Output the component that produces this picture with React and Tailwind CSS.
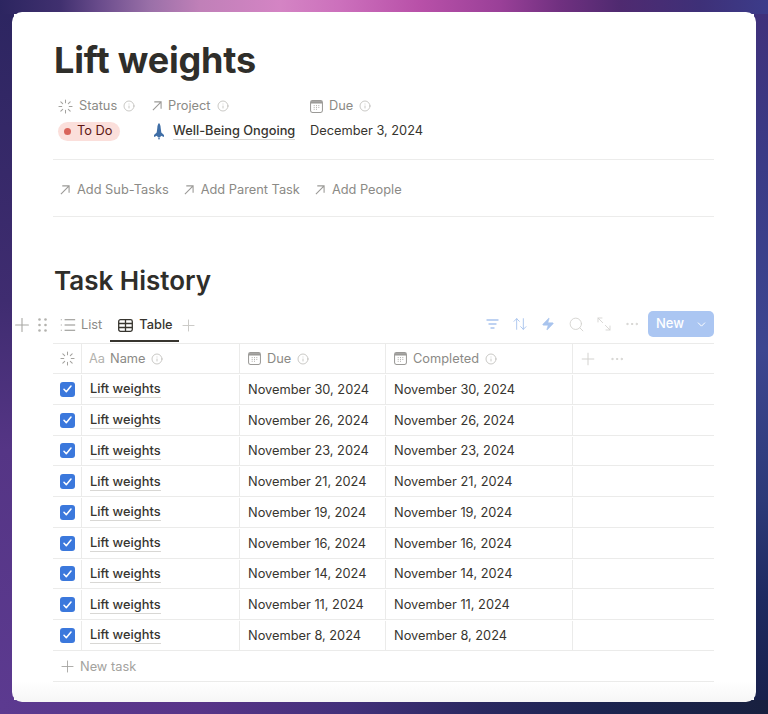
import { ArrowUpDown, ChevronDown, Ellipsis, Info, List, Maximize2, Plus, Search, Zap } from 'lucide-react';

const rows = [
  'November 30, 2024',
  'November 26, 2024',
  'November 23, 2024',
  'November 21, 2024',
  'November 19, 2024',
  'November 16, 2024',
  'November 14, 2024',
  'November 11, 2024',
  'November 8, 2024',
];

const StatusIcon = ({ size = 15 }) => (
  <svg width={size} height={size} viewBox="0 0 16 16" stroke="#a3a29e" strokeWidth="1.1" strokeLinecap="round" className="shrink-0">
    <path d="M8 1v3M8 12v3M1 8h3M12 8h3M3 3l2 2M11 11l2 2M3 13l2-2M11 5l2-2" />
  </svg>
);

const CalendarIcon = () => (
  <svg width="13" height="13" viewBox="0 0 14 14" className="shrink-0">
    <rect x="0.6" y="0.6" width="12.8" height="12.8" rx="2" fill="none" stroke="#9b9a97" strokeWidth="1.1" />
    <path d="M1 1.2h12v2.6H1z" fill="#9b9a97" />
    <path d="M4 6h1M6.500 6h1M9 6h1M4 8h1M6.500 8h1M9 8h1M4 10h1M6.500 10h1" stroke="#a3a29e" strokeWidth="1" />
  </svg>
);

const TableIcon = () => (
  <svg width="15" height="13" viewBox="0 0 15 13" fill="none" stroke="#37352f" strokeWidth="1.3" className="shrink-0">
    <rect x="0.7" y="0.7" width="13.6" height="11.6" rx="1.8" />
    <path d="M0.7 4.500h13.600M0.7 8.500h13.600M7.500 0.7v11.600" />
  </svg>
);

const Rocket = () => (
  <svg width="12" height="17" viewBox="0 0 12 17" className="shrink-0">
    <path d="M6 0c1.200 1.200 1.600 3 1.700 5l.6 4.400L11 12v2L8 12.800 7.400 14H4.600L4 12.800 1 14v-2l2.700-2.600.6-4.400C4.400 3 4.800 1.200 6 0z" fill="#3f6ea6" />
    <path d="M4.800 14.500h2.400L6 17z" fill="#3f6ea6" />
  </svg>
);

const Grip = () => (
  <svg width="9" height="14" viewBox="0 0 9 14" fill="#b3b2ae">
    <circle cx="1.500" cy="1.500" r="1.300" />
    <circle cx="7.500" cy="1.500" r="1.300" />
    <circle cx="1.500" cy="7" r="1.300" />
    <circle cx="7.500" cy="7" r="1.300" />
    <circle cx="1.500" cy="12.500" r="1.300" />
    <circle cx="7.500" cy="12.500" r="1.300" />
  </svg>
);

const Tip = () => <Info size={12} strokeWidth={1.4} className="shrink-0 text-[#b3b2ae]" />;

const LinkArrow = () => (
  <svg width="10" height="10" viewBox="0 0 11 11" fill="none" stroke="#9b9a97" strokeWidth="1.200" className="shrink-0">
    <path d="M1 10L10 1M2.500 1H10v7.500" />
  </svg>
);

const Check = () => (
  <div className="flex size-[15px] items-center justify-center rounded-[3px] bg-[#3b78dc]">
    <svg width="9" height="8" viewBox="0 0 9 8" fill="none" stroke="white" strokeWidth="1.500" strokeLinecap="round" strokeLinejoin="round">
      <path d="M1 4.200l2.300 2.500L8 1" />
    </svg>
  </div>
);

const Prop = ({ icon, label, value, className }) => (
  <div className={className}>
    <div className="flex h-[20px] items-center gap-[6px] text-[12.8px] text-[#8b8a86]">
      {icon}
      <span>{label}</span>
      <Tip />
    </div>
    <div className="mt-[5px] flex h-[20px] items-center">{value}</div>
  </div>
);

const Cell = ({ children, className = '' }) => (
  <div className={`flex items-center border-r border-[#ebebea] ${className}`}>{children}</div>
);

const ToolSlot = ({ children }) => <div className="flex w-[28px] justify-center">{children}</div>;

const App = () => {
  return (
    <div className="h-[714px] w-[768px] overflow-hidden p-3 font-['Inter','Liberation_Sans',sans-serif] [background:linear-gradient(to_right,#2c2560_0px,#40306f_60px,#6a4c8c_100px,#9a70a8_150px,#c080b8_200px,#d484c4_280px,#cc70bc_340px,#b850a8_420px,#9a4098_500px,#703080_560px,#4f2a70_620px,#3e3078_700px,#3c3c8a_768px)_top/100%_14px_no-repeat,linear-gradient(to_right,#5c3a90_0px,#583488_200px,#42307a_350px,#2a2860_480px,#1c2450_600px,#18203f_768px)_bottom/100%_14px_no-repeat,linear-gradient(to_bottom,#2c2560_0px,#3f2c70_300px,#553585_450px,#5c3a90_714px)_left/14px_100%_no-repeat,linear-gradient(to_bottom,#40307a_0px,#3a3a85_150px,#3c4690_350px,#2d3a78_500px,#1e2a60_600px,#18204a_714px)_right/14px_100%_no-repeat]">
      <div className="h-[690px] w-[744px] rounded-[10px] bg-[linear-gradient(to_bottom,#ffffff_97%,#f6f6f6_100%)] pl-[41px] pr-[42px] pt-[28px] text-[#37352f]">
        <h1 className="ml-px h-[40px] text-[36px] font-bold leading-[40px] tracking-[-0.2px] text-[#2f2e2a]">Lift weights</h1>

        <div className="mt-[16px] flex h-[54px]">
          <Prop
            className="w-[98px] pl-[5px]"
            icon={<StatusIcon />}
            label="Status"
            value={
              <span className="flex h-[19px] items-center gap-[6px] rounded-full bg-[#fbdfdb] pl-[6px] pr-[8px] text-[12.8px] text-[#5d1715]">
                <span className="size-[7px] rounded-full bg-[#d9645a]" />
                To Do
              </span>
            }
          />
          <Prop
            className="w-[159px] pl-px"
            icon={<LinkArrow />}
            label="Project"
            value={
              <span className="flex items-center gap-[8px] pl-px text-[12.8px] font-medium">
                <Rocket />
                <span className="border-b border-[#d8d7d4] leading-[17px]">Well-Being Ongoing</span>
              </span>
            }
          />
          <Prop
            icon={<CalendarIcon />}
            label="Due"
            value={<span className="text-[12.8px] text-[#37352f]">December 3, 2024</span>}
          />
        </div>

        <div className="mt-[9px] flex h-[58px] items-center gap-[15px] border-y border-[#ececeb] pl-[7px] pt-[3px] text-[12.8px] text-[#8b8a86]">
          <span className="flex items-center gap-[7px]"><LinkArrow />Add Sub-Tasks</span>
          <span className="flex items-center gap-[7px]"><LinkArrow />Add Parent Task</span>
          <span className="flex items-center gap-[7px]"><LinkArrow />Add People</span>
        </div>

        <h2 className="ml-px mt-[47px] h-[34px] text-[26px] font-semibold leading-[34px] text-[#2f2e2a]">Task History</h2>

        <div className="relative mt-[13px] flex h-[32px] items-start justify-between">
          <div className="absolute left-[-42px] top-[3px] flex items-center gap-[5px] text-[#a8a7a3]">
            <Plus size={22} strokeWidth={1.2} />
            <Grip />
          </div>
          <div className="flex h-full items-start text-[12.8px]">
            <div className="flex h-[28px] items-center gap-[4px] pl-[6px] text-[#8b8a86]">
              <List size={18} strokeWidth={1.3} />
              List
            </div>
            <div className="ml-[8px] flex h-[31px] w-[69px] items-center gap-[6px] border-b-2 border-[#37352f] pb-[1px] pl-[8px] font-medium text-[#37352f]">
              <TableIcon />
              Table
            </div>
            <Plus size={19} strokeWidth={1.2} className="mt-[5px] text-[#c9c8c5]" />
          </div>
          <div className="flex items-center">
            <div className="flex items-center">
              <ToolSlot>
                <svg width="13" height="10" viewBox="0 0 13 10" stroke="#a9c4ee" strokeWidth="1.400" strokeLinecap="round">
                  <path d="M1 1h11M3 5h7M5 9h3" />
                </svg>
              </ToolSlot>
              <ToolSlot><ArrowUpDown size={16} strokeWidth={1.4} className="text-[#a9c4ee]" /></ToolSlot>
              <ToolSlot><Zap size={14} fill="#a9c4ee" strokeWidth={1} className="text-[#a9c4ee]" /></ToolSlot>
              <ToolSlot><Search size={17} strokeWidth={1.3} className="text-[#d3d2cf]" /></ToolSlot>
              <ToolSlot><Maximize2 size={16} strokeWidth={1.3} className="rotate-90 text-[#d3d2cf]" /></ToolSlot>
              <ToolSlot><Ellipsis size={16} strokeWidth={1.5} className="text-[#d3d2cf]" /></ToolSlot>
            </div>
            <div className="ml-[2px] flex h-[26px] w-[66px] items-center justify-between rounded-[5px] bg-[#abc6f2] pl-[8px] pr-[6px] text-[13px] font-medium text-white">
              New
              <ChevronDown size={13} strokeWidth={1.8} />
            </div>
          </div>
        </div>

        <div className="grid h-[31px] grid-cols-[29px_158px_146px_187px_1fr] border-y border-[#ebebea] text-[12.8px] text-[#8b8a86]">
          <Cell className="justify-center"><StatusIcon /></Cell>
          <Cell className="gap-[5px] pl-[7px]">
            <span className="text-[#b3b2ae]">Aa</span>
            Name
            <Tip />
          </Cell>
          <Cell className="gap-[6px] pl-[8px]"><CalendarIcon />Due<Tip /></Cell>
          <Cell className="gap-[6px] pl-[8px]"><CalendarIcon />Completed<Tip /></Cell>
          <div className="flex items-center gap-[11px] pl-[5px] text-[#d3d2cf]">
            <Plus size={20} strokeWidth={1.2} />
            <Ellipsis size={16} strokeWidth={1.5} />
          </div>
        </div>

        {rows.map((date, i) => (
          <div key={i} className="grid h-[30.75px] grid-cols-[29px_158px_146px_187px_1fr] border-b border-[#ebebea] pt-px text-[12.8px] text-[#37352f]">
            <Cell className="justify-center"><Check /></Cell>
            <Cell className="pl-[8px] font-medium">
              <span className="border-b border-[#d8d7d4] leading-[17px]">Lift weights</span>
            </Cell>
            <Cell className="pl-[8px]">{date}</Cell>
            <Cell className="pl-[8px]">{date}</Cell>
            <div />
          </div>
        ))}

        <div className="flex h-[31px] items-center gap-[3px] border-b border-[#ebebea] pl-[5px] pt-px text-[12.8px] text-[#a3a29e]">
          <Plus size={19} strokeWidth={1.1} />
          New task
        </div>
      </div>
    </div>
  );
};

export default App;
